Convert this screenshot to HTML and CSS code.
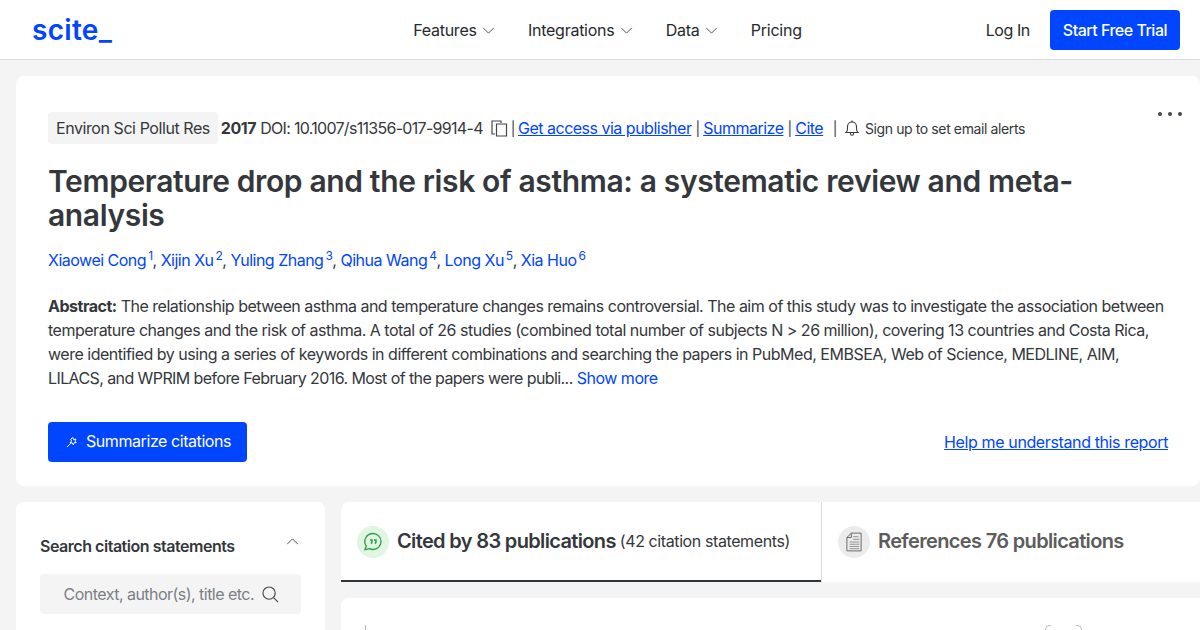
FILE: index.html
```html
<!DOCTYPE html>
<html lang="en">
<head>
    <meta charset="UTF-8">
    <meta name="viewport" content="width=device-width, initial-scale=1.0">
    <title>Temperature drop and the risk of asthma | scite</title>
    <link rel="stylesheet" href="styles.css">
</head>
<body>
    <header class="topbar">
        <a class="logo" href="#">scite_</a>
        <nav class="main-nav">
            <a href="#">Features <svg class="chev" viewBox="0 0 14 8"><path d="M1 1l6 6 6-6"/></svg></a>
            <a href="#">Integrations <svg class="chev" viewBox="0 0 14 8"><path d="M1 1l6 6 6-6"/></svg></a>
            <a href="#">Data <svg class="chev" viewBox="0 0 14 8"><path d="M1 1l6 6 6-6"/></svg></a>
            <a href="#">Pricing</a>
        </nav>
        <div class="account">
            <a href="#">Log In</a>
            <a class="btn-trial" href="#">Start Free Trial</a>
        </div>
    </header>

    <main class="page">
        <article class="paper-card">
            <button class="more" aria-label="More"><i></i><i></i><i></i></button>
            <div class="meta">
                <span class="journal">Environ Sci Pollut Res</span>
                <b class="year">2017</b>
                <span class="doi">DOI: 10.1007/s11356-017-9914-4</span>
                <svg class="copy" viewBox="0 0 17 17"><path d="M4 14H1V1h9v2"/><path d="M5.500 4h10v12h-10z"/></svg>
                <span class="sep first">|</span>
                <a href="#">Get access via publisher</a>
                <span class="sep">|</span>
                <a href="#">Summarize</a>
                <span class="sep">|</span>
                <a href="#">Cite</a>
                <span class="sep wide">|</span>
                <svg class="bell" viewBox="0 0 14 16"><path d="M1 12.500c1.200-1 1.500-2 1.500-4V6.500a4.500 4.500 0 0 1 9 0v2c0 2 .3 3 1.500 4z"/><path d="M5.500 13v.8a1.500 1.500 0 0 0 3 0V13"/><path d="M7 .5V2"/></svg>
                <span class="alerts">Sign up to set email alerts</span>
            </div>

            <h1>Temperature drop and the risk of asthma: a systematic review and meta-analysis</h1>

            <p class="authors">
                <a href="#">Xiaowei Cong<sup>1</sup></a>, <a href="#">Xijin Xu<sup>2</sup></a>, <a href="#">Yuling Zhang<sup>3</sup></a>, <a href="#">Qihua Wang<sup>4</sup></a>, <a href="#">Long Xu<sup>5</sup></a>, <a href="#">Xia Huo<sup>6</sup></a>
            </p>

            <p class="abstract">
                <b>Abstract:</b> The relationship between asthma and temperature changes remains controversial. The aim of this study was to investigate the association between temperature changes and the risk of asthma. A total of 26 studies (combined total number of subjects N &gt; 26 million), covering 13 countries and Costa Rica, were identified by using a series of keywords in different combinations and searching the papers in PubMed, EMBSEA, Web of Science, MEDLINE, AIM, <span class="tail">LILACS, and WPRIM before February 2016. Most of the papers were publi...</span> <a class="show-more" href="#">Show more</a>
            </p>

            <div class="actions">
                <a class="btn-summarize" href="#">
                    <svg viewBox="0 0 12 12"><path d="M1 11l4.500-4.500"/><path d="M7 1.500l.6 2 2.400-.4-1.100 2 1.400 1.500-2.200.2-.8 2-1.100-1.900-2.100-.3 1.400-1.500-.7-2z"/></svg>
                    Summarize citations
                </a>
                <a class="help" href="#">Help me understand this report</a>
            </div>
        </article>

        <div class="lower">
            <aside class="filters">
                <div class="filters-head">
                    <h2>Search citation statements</h2>
                    <svg class="chev up" viewBox="0 0 14 8"><path d="M1 7l6-6 6 6"/></svg>
                </div>
                <div class="search">
                    <span>Context, author(s), title etc.</span>
                    <svg viewBox="0 0 18 18"><circle cx="7.500" cy="7.500" r="6.500"/><path d="M12.300 12.300L17 17"/></svg>
                </div>
            </aside>

            <section class="results">
                <div class="tabs">
                    <div class="tab active">
                        <span class="tab-icon green">
                            <svg viewBox="0 0 20 20"><path d="M10 1.500a8 8 0 0 1 0 16c-1.300 0-2.600-.3-3.700-.9l-4.300 1 1.300-3.500A8 8 0 0 1 10 1.500z"/><path class="quote" d="M7 8h2v1.800c0 .8-.4 1.400-1.200 1.700M11 8h2v1.800c0 .8-.4 1.400-1.200 1.700"/></svg>
                        </span>
                        <strong>Cited by 83 publications</strong>
                        <small>(42 citation statements)</small>
                    </div>
                    <div class="tab">
                        <span class="tab-icon grey">
                            <svg viewBox="0 0 18 22"><path d="M6 1h11v20H1V6z"/><path d="M6 1v5H1"/><path class="lines" d="M8 5h6M8 8h7M4 11h11M4 13.500h11M4 16h11M4 18.500h11"/></svg>
                        </span>
                        <strong>References 76 publications</strong>
                    </div>
                </div>
                <div class="chart-card">
                    <span class="axis"></span>
                    <span class="pill"></span>
                </div>
            </section>
        </div>
    </main>
</body>
</html>
```

FILE: styles.css
```css
:root {
    --blue: #0045ff;
    --ink: #34373c;
    --bg: #f4f4f4;
}

* {
    box-sizing: border-box;
    margin: 0;
    padding: 0;
}

html, body {
    height: 630px;
    overflow: hidden;
}

body {
    font-family: Inter, "Liberation Sans", sans-serif;
    font-size: 16px;
    letter-spacing: -0.43px;
    color: var(--ink);
    background: var(--bg);
}

a {
    color: var(--blue);
}

.topbar {
    display: flex;
    align-items: center;
    height: 60px;
    padding: 0 20px 0 32px;
    background: #fff;
    border-bottom: 1px solid #dcdcdc;
}

.logo {
    font-size: 28px;
    font-weight: 600;
    letter-spacing: 0.3px;
    color: var(--blue);
    text-decoration: none;
}

.main-nav {
    display: flex;
    gap: 33px;
    margin-left: 301px;
    letter-spacing: -0.25px;
}

.main-nav a,
.account a {
    color: #26282c;
    text-decoration: none;
}

.chev {
    width: 13px;
    height: 7px;
    margin-left: 1px;
    vertical-align: 2px;
    fill: none;
    stroke: #4a4d52;
    stroke-width: 1.100;
}

.account {
    display: flex;
    align-items: center;
    gap: 20px;
    margin-left: auto;
}

.account .btn-trial {
    display: block;
    padding: 10px 13px;
    height: 40px;
    line-height: 20px;
    border-radius: 4px;
    font-weight: 500;
    letter-spacing: -0.5px;
    color: #fff;
    background: var(--blue);
}

.page {
    padding: 16px 0 0 16px;
}

.paper-card {
    position: relative;
    height: 410px;
    padding: 36px 32px 0;
    border-radius: 8px;
    background: #fff;
}

.more {
    position: absolute;
    top: 36px;
    right: 18px;
    display: flex;
    gap: 6px;
    border: 0;
    background: none;
}

.more i {
    width: 4px;
    height: 4px;
    border-radius: 50%;
    background: #44474c;
}

.meta {
    display: flex;
    align-items: center;
    height: 32px;
    white-space: nowrap;
}

.meta a {
    letter-spacing: -0.5px;
}

.journal {
    height: 32px;
    line-height: 32px;
    padding: 0 8px;
    margin-right: 3px;
    border-radius: 4px;
    background: var(--bg);
}

.year {
    font-weight: 700;
    margin-right: 4px;
}

.doi {
    letter-spacing: -0.7px;
}

.copy {
    width: 17px;
    height: 17px;
    margin: 0 3px 0 8px;
    fill: none;
    stroke: #44474c;
    stroke-width: 1.200;
}

.sep {
    margin: 0 3.500px 0 4px;
    font-size: 14px;
}

.sep.first {
    margin-left: 0;
    margin-right: 3px;
}

.sep.wide {
    margin: 0 7px 0 9.500px;
}

.bell {
    width: 14px;
    height: 16px;
    margin: 0 6px 0 1px;
    fill: none;
    stroke: #34373c;
    stroke-width: 1.100;
}

.alerts {
    font-size: 14px;
    letter-spacing: -0.39px;
}

h1 {
    margin-top: 20px;
    font-size: 30px;
    font-weight: 600;
    line-height: 34px;
    letter-spacing: -0.36px;
    color: #34373c;
}

.authors {
    margin-top: 16px;
    line-height: 24px;
    letter-spacing: -0.5px;
}

.authors a {
    text-decoration: none;
}

sup {
    font-size: 12px;
    line-height: 0;
    margin-left: 2px;
}

.abstract {
    margin-top: 22px;
    line-height: 24px;
    letter-spacing: -0.49px;
}

.abstract b {
    font-weight: 700;
}

.abstract .tail {
    letter-spacing: -0.59px;
}

.show-more {
    text-decoration: none;
}

.actions {
    display: flex;
    align-items: center;
    justify-content: space-between;
    margin-top: 32px;
}

.btn-summarize {
    display: flex;
    align-items: center;
    height: 40px;
    padding: 0 16px 2px 18px;
    border-radius: 4px;
    color: #fff;
    background: var(--blue);
    text-decoration: none;
}

.btn-summarize svg {
    width: 12px;
    height: 12px;
    margin: 2px 8px 0 0;
    fill: none;
    stroke: #fff;
    stroke-width: 1;
}

.help {
    letter-spacing: -0.38px;
}

.lower {
    display: flex;
    gap: 16px;
    margin-top: 16px;
}

.filters {
    flex: none;
    width: 309px;
    height: 128px;
    padding: 34px 24px 0;
    border-radius: 8px 8px 0 0;
    background: #fff;
}

.filters-head {
    display: flex;
    align-items: center;
    justify-content: space-between;
    padding-right: 2px;
}

.filters h2 {
    font-size: 16px;
    font-weight: 600;
    letter-spacing: -0.47px;
}

.filters-head .up {
    margin: 0 0 10px 0;
    width: 13px;
}

.search {
    display: flex;
    align-items: center;
    justify-content: flex-end;
    gap: 8px;
    width: 261px;
    height: 40px;
    margin-top: 18px;
    padding-right: 22px;
    border-radius: 4px;
    letter-spacing: -0.53px;
    color: #7b7f86;
    background: var(--bg);
}

.search svg {
    width: 17px;
    height: 17px;
    fill: none;
    stroke: #44474c;
    stroke-width: 1.200;
}

.results {
    flex: 1;
}

.tabs {
    display: flex;
    height: 80px;
    border-radius: 8px 0 0 0;
    background: #fff;
}

.tab {
    display: flex;
    align-items: center;
    padding-left: 16px;
}

.tab.active {
    width: 481px;
    border-right: 1px solid #dcdcdc;
    box-shadow: inset 0 -2px 0 #30343b;
    border-radius: 8px 0 0 0;
}

.tab-icon {
    display: flex;
    align-items: center;
    justify-content: center;
    width: 32px;
    height: 32px;
    margin-right: 8px;
    border-radius: 50%;
}

.tab-icon.green {
    background: #e0f5e2;
}

.tab-icon.grey {
    background: #ececec;
}

.tab-icon svg {
    fill: none;
}

.tab-icon.green svg {
    width: 20px;
    height: 20px;
    stroke: #2e9e4a;
    stroke-width: 1.300;
}

.tab-icon.green .quote {
    stroke-width: 1.500;
}

.tab-icon.grey svg {
    width: 16px;
    height: 20px;
    stroke: #5a5a5a;
}

.tab-icon.grey .lines {
    stroke: #8a8a8a;
}

.tab strong {
    margin-bottom: 2px;
    font-size: 20px;
    font-weight: 600;
    letter-spacing: -0.65px;
}

.tab small {
    margin-bottom: 2px;
    margin-left: 4px;
    font-size: 16px;
    letter-spacing: -0.4px;
}

.tab:not(.active) strong {
    color: #5c5c5c;
}

.chart-card {
    position: relative;
    height: 32px;
    margin-top: 16px;
    border-radius: 8px 0 0 0;
    background: #fff;
}

.axis {
    position: absolute;
    top: 27px;
    left: 24px;
    width: 1px;
    height: 5px;
    background: #b5b5b5;
}

.pill {
    position: absolute;
    top: 27px;
    left: 704px;
    width: 37px;
    height: 5px;
}

.pill::before,
.pill::after {
    content: "";
    position: absolute;
    top: 0;
    width: 5px;
    height: 5px;
    border-top: 1px solid #bdbdbd;
}

.pill::before {
    left: 0;
    border-left: 1px solid #bdbdbd;
    border-top-left-radius: 5px;
}

.pill::after {
    right: 0;
    border-right: 1px solid #bdbdbd;
    border-top-right-radius: 5px;
}
```
